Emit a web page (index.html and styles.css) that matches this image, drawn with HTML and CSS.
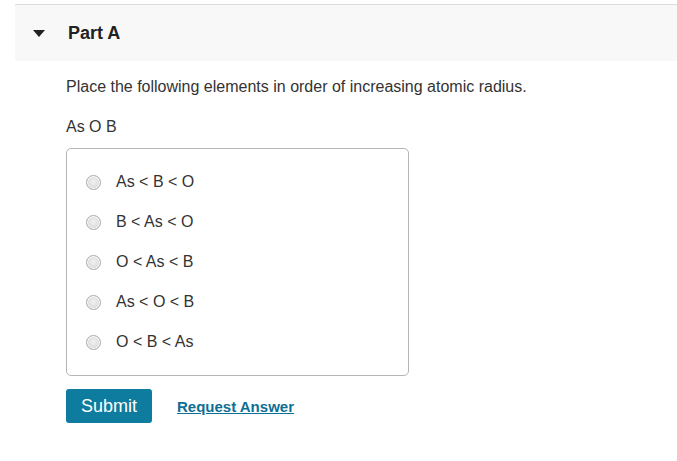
FILE: index.html
```html
<!DOCTYPE html>
<html>
<head>
  <title>Part A</title>
  <meta charset="utf-8">
  <link rel="stylesheet" href="styles.css">
</head>
<body>
<div class="part">
  <div class="part-header">
    <span class="caret"></span>
    <h3>Part A</h3>
  </div>
  <div class="part-body">
    <p class="question">Place the following elements in order of increasing atomic radius.</p>
    <p class="elements">As O B</p>

    <div class="choices">
      <label class="choice"><input type="radio" name="ans"><span>As &lt; B &lt; O</span></label>
      <label class="choice"><input type="radio" name="ans"><span>B &lt; As &lt; O</span></label>
      <label class="choice"><input type="radio" name="ans"><span>O &lt; As &lt; B</span></label>
      <label class="choice"><input type="radio" name="ans"><span>As &lt; O &lt; B</span></label>
      <label class="choice"><input type="radio" name="ans"><span>O &lt; B &lt; As</span></label>
    </div>

    <div class="actions">
      <button class="submit">Submit</button>
      <a href="#" class="request">Request Answer</a>
    </div>
  </div>
</div>
</body>
</html>
```

FILE: styles.css
```css
body {
  font-family: 'Liberation Sans', Arial, sans-serif;
  background: #fff;
  color: #333;
  margin: 0;
  padding: 4px 0 0 15px;
}
.part-header {
  display: flex;
  align-items: center;
  height: 56px;
  background: #f8f8f8;
  border-top: 1px solid #dcdcdc;
  padding-left: 18px;
}
/* little down arrow before the title */
.caret {
  width: 0;
  height: 0;
  border-left: 6px solid transparent;
  border-right: 6px solid transparent;
  border-top: 7px solid #222;
  margin-top: 1px;
}
.part-header h3 {
  margin: 0 0 0 23px;
  font-size: 18px;
  font-weight: bold;
  color: #222;
}
.part-body {
  padding-left: 51px;
}
.question {
  margin: 16px 0 0;
  font-size: 16px;
  line-height: 20px;
}
.elements {
  margin: 20px 0 0;
  font-size: 16px;
  line-height: 20px;
}
.choices {
  width: 341px;
  margin-top: 11px;
  border: 1px solid #b5b5b5;
  border-radius: 5px;
  padding: 13px 0;
}
.choice {
  display: flex;
  align-items: center;
  height: 40px;
  padding-left: 19px;
  font-size: 16px;
  cursor: pointer;
}
/* old-style grey radio */
.choice input {
  appearance: none;
  -webkit-appearance: none;
  margin: 0 15px 0 0;
  width: 15px;
  height: 15px;
  border: 1px solid #a9a9a9;
  border-radius: 50%;
  background: radial-gradient(circle at 50% 45%, #f2f2f2 0%, #dcdcdc 60%, #c8c8c8 100%);
  box-shadow: inset 0 0 0 1px #fff;
}
.choice input:checked {
  background: radial-gradient(circle, #333 0 3px, #e6e6e6 4px);
}
.actions {
  display: flex;
  align-items: center;
  margin-top: 13px;
}
.submit {
  background: #0e7c9e;
  color: #fff;
  border: none;
  border-radius: 3px;
  font-family: inherit;
  font-size: 18px;
  height: 34px;
  width: 86px;
  padding: 0;
  cursor: pointer;
}
.request {
  margin-left: 25px;
  color: #0e6f94;
  font-weight: bold;
  font-size: 15px;
  text-decoration: underline;
}
```
